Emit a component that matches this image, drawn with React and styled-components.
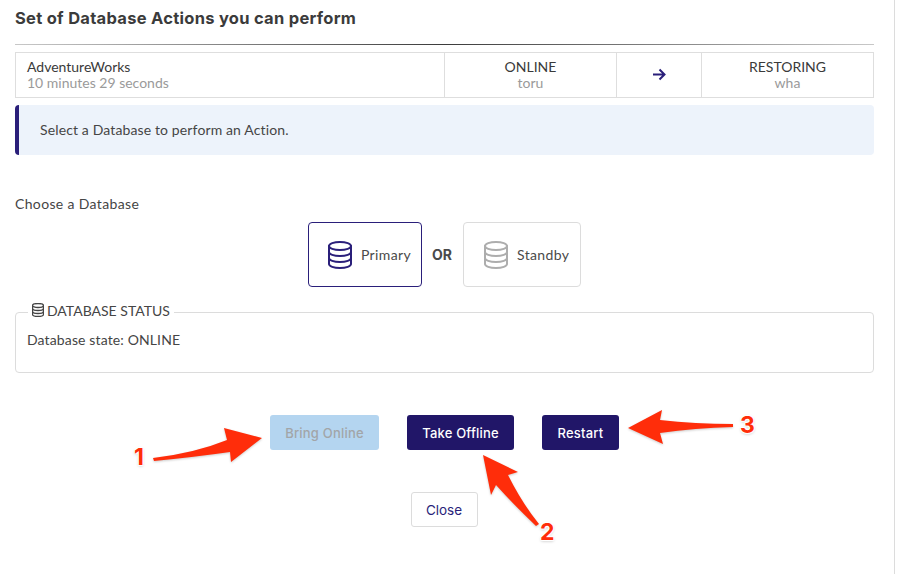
import React from 'react'
import styled, { createGlobalStyle } from 'styled-components'

const Global = createGlobalStyle`
  html, body { margin: 0; padding: 0; background: #fff; }
  body { font-family: "Lato", "Liberation Sans", sans-serif; color: #3f3f3f; }
  * { box-sizing: border-box; }
`

const Page = styled.div`
  position: relative;
  width: 895px;
  height: 574px;
  overflow: hidden;
  border-right: 1px solid #dcdcdc;
  padding: 9px 20px 0 15px;
`

const Title = styled.h1`
  margin: 0;
  height: 18px;
  line-height: 18px;
  font-size: 16.5px;
  font-weight: 700;
  font-family: "Inter", sans-serif;
  letter-spacing: 0.28px;
  color: #3b3b3b;
`

const Rule = styled.div`
  height: 1px;
  margin-top: 17px;
  background: linear-gradient(90deg, #c8c8c8 0%, #3c3c3c 50%, #c8c8c8 100%);
`

const Summary = styled.div`
  display: grid;
  grid-template-columns: 428px 172px 85px 1fr;
  height: 46px;
  margin-top: 7px;
  border: 1px solid #dedede;
`

const Cell = styled.div`
  display: flex;
  flex-direction: column;
  justify-content: center;
  align-items: ${p => (p.$left ? 'flex-start' : 'center')};
  padding-left: ${p => (p.$left ? '11px' : '0')};
  padding-bottom: 1px;
  border-left: ${p => (p.$left ? 'none' : '1px solid #dedede')};
`

const Main = styled.span`
  font-size: 14px;
  line-height: 16px;
  color: #3a3a3a;
`

const Sub = styled.span`
  font-size: 14px;
  line-height: 16px;
  color: #9a9a9a;
`

const Alert = styled.div`
  display: flex;
  align-items: center;
  height: 50px;
  margin-top: 7px;
  padding: 0 0 2px 21px;
  background: #edf3fb;
  border-left: 4px solid #2a1f7a;
  border-radius: 4px;
  font-size: 14px;
  letter-spacing: 0.13px;
  color: #454545;
`

const Label = styled.div`
  margin-top: 41px;
  height: 16px;
  line-height: 16px;
  font-size: 14px;
  letter-spacing: 0.35px;
  color: #454545;
`

const Choices = styled.div`
  display: flex;
  justify-content: center;
  align-items: center;
  gap: 10px;
  margin-top: 10px;
`

const Choice = styled.div`
  display: flex;
  align-items: center;
  gap: 9px;
  width: ${p => (p.$active ? '114px' : '118px')};
  height: 65px;
  padding-left: ${p => (p.$active ? '19px' : '20px')};
  border: 1px solid ${p => (p.$active ? '#2a1f7a' : '#dcdcdc')};
  border-radius: 4px;
  font-size: 14px;
  letter-spacing: 0.35px;
  color: #4a4a4a;
  svg { color: ${p => (p.$active ? '#2a1f7a' : '#adadad')}; }
`

const Or = styled.span`
  width: 21px;
  font-family: "Inter", sans-serif;
  font-size: 14px;
  font-weight: 700;
  color: #4a4a4a;
`

const Status = styled.fieldset`
  height: 70px;
  margin: 16px 0 0;
  padding: 0 11px;
  border: 1px solid #dcdcdc;
  border-radius: 4px;
`

const Legend = styled.legend`
  display: flex;
  align-items: flex-start;
  gap: 3px;
  height: 18px;
  margin-left: 1px;
  padding: 0 4px;
  font-size: 14px;
  line-height: 16px;
  color: #454545;
`

const StatusText = styled.div`
  margin-top: 11px;
  font-size: 14px;
  letter-spacing: 0.13px;
  line-height: 16px;
  color: #454545;
`

const Actions = styled.div`
  display: flex;
  justify-content: center;
  gap: 28px;
  margin-top: 42px;
  padding-right: 1px;
`

const Button = styled.button`
  height: 35px;
  width: ${p => p.$w}px;
  border: none;
  border-radius: 3px;
  padding: 0 0 0 1px;
  background: ${p => (p.disabled ? '#b4d5f0' : '#211668')};
  color: ${p => (p.disabled ? '#a2a5a8' : '#fff')};
  font-family: "Inter", sans-serif;
  font-size: 13px;
  font-weight: 500;
  letter-spacing: 0.2px;
`

const Footer = styled.div`
  display: flex;
  justify-content: center;
  margin-top: 42px;
  padding-right: 1px;
`

const CloseButton = styled.button`
  width: 67px;
  height: 35px;
  padding: 0;
  background: #fff;
  border: 1px solid #dcdcdc;
  border-radius: 3px;
  color: #2a1f7a;
  font-family: "Inter", sans-serif;
  font-size: 13.5px;
`

const Marks = styled.svg`
  position: absolute;
  left: 0;
  top: 0;
  pointer-events: none;
  filter: drop-shadow(0 1px 1px rgba(0, 0, 0, 0.2));
`

const Num = styled.span`
  position: absolute;
  left: ${p => p.$x}px;
  top: ${p => p.$y}px;
  font-family: "Inter", sans-serif;
  font-size: 23px;
  font-weight: 700;
  line-height: 26px;
  color: #ff2d0a;
  text-shadow: 1px 1px 1px #fff, -1px -1px 1px #fff, 1px -1px 1px #fff, -1px 1px 1px #fff, 0 1px 3px rgba(0, 0, 0, 0.35);
`

function DbIcon({ height = 28, width = 24, sw = 2 }) {
  return (
    <svg width={width} height={height} viewBox="0 0 24 28" fill="none" stroke="currentColor" strokeWidth={sw} strokeLinecap="round">
      <ellipse cx="12" cy="5" rx="11" ry="4" />
      <path d="M1 5v18c0 2.200 4.900 4 11 4s11-1.800 11-4V5" />
      <path d="M1 11c0 2.200 4.900 4 11 4s11-1.800 11-4" />
      <path d="M1 17c0 2.200 4.900 4 11 4s11-1.800 11-4" />
    </svg>
  )
}

export default function App() {
  return (
    <>
      <Global />
      <Page>
        <Title>Set of Database Actions you can perform</Title>
        <Rule />
        <Summary>
          <Cell $left>
            <Main>AdventureWorks</Main>
            <Sub>10 minutes 29 seconds</Sub>
          </Cell>
          <Cell>
            <Main>ONLINE</Main>
            <Sub>toru</Sub>
          </Cell>
          <Cell>
            <svg width="14" height="13" viewBox="0 0 14 13" fill="none" stroke="#2a1f7a" strokeWidth="2">
              <path d="M1 6.500h11M7.500 1.500l5 5-5 5" />
            </svg>
          </Cell>
          <Cell>
            <Main>RESTORING</Main>
            <Sub>wha</Sub>
          </Cell>
        </Summary>
        <Alert>Select a Database to perform an Action.</Alert>
        <Label>Choose a Database</Label>
        <Choices>
          <Choice $active><DbIcon />Primary</Choice>
          <Or>OR</Or>
          <Choice><DbIcon />Standby</Choice>
        </Choices>
        <Status>
          <Legend><DbIcon height={14} width={12} sw={2.6} />DATABASE STATUS</Legend>
          <StatusText>Database state: ONLINE</StatusText>
        </Status>
        <Actions>
          <Button disabled $w={109}>Bring Online</Button>
          <Button $w={107}>Take Offline</Button>
          <Button $w={77}>Restart</Button>
        </Actions>
        <Footer>
          <CloseButton>Close</CloseButton>
        </Footer>
        <Marks width="895" height="574" viewBox="0 0 895 574">
          <g fill="#ff2d0a">
            <path d="M153 458 Q195 453 227 440 L224 428 L262 438 L231 462 L230 452 Q195 457 154 461 Z" />
            <path d="M483 455 L518 472 L508 475 Q522 503 539 524 L536 526 Q514 505 496 485 L491 495 Z" />
            <path d="M628 428 L662 410 L660 420 Q695 424 733 424 L733 427 Q695 428 660 433 L663 444 Z" />
          </g>
        </Marks>
        <Num $x={134} $y={444}>1</Num>
        <Num $x={540} $y={519}>2</Num>
        <Num $x={740} $y={412}>3</Num>
      </Page>
    </>
  )
}
